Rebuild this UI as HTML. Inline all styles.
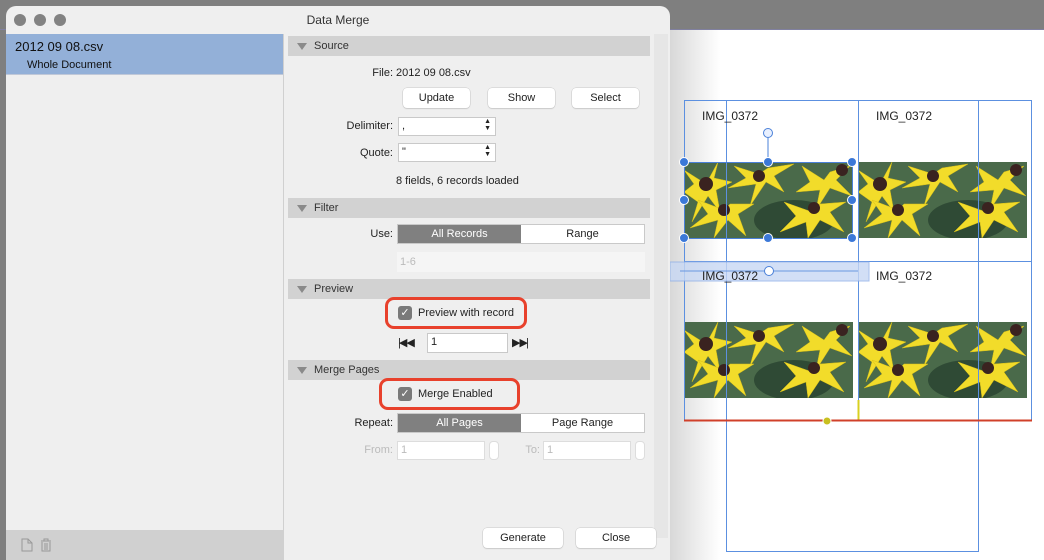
<!DOCTYPE html>
<html><head><style>
*{box-sizing:border-box;margin:0;padding:0}
html,body{width:1044px;height:560px;overflow:hidden}
body{background:#7f7f7f;font-family:"Liberation Sans",sans-serif;font-size:11px;color:#222;position:relative}
.abs{position:absolute}
.win{left:6px;top:6px;width:664px;height:554px;background:#efefef;border-radius:10px 10px 0 0;overflow:hidden}
.hdr{position:absolute;left:282px;width:362px;height:20px;background:#d2d2d2;font-size:11px;line-height:20px;padding-left:26px;color:#333}
.hdr:before{content:"";position:absolute;left:9px;top:7px;border-left:5px solid transparent;border-right:5px solid transparent;border-top:7px solid #8a8a8a}
.lbl{position:absolute;text-align:right;font-size:11px}
.btn{position:absolute;height:20px;background:#fff;border-radius:4px;box-shadow:0 0 0 .5px #c8c8c8,0 1px 1px #ccc;text-align:center;line-height:20px;font-size:11px}
.fld{position:absolute;height:19px;background:#fff;border:1px solid #c9c9c9;font-size:11px;line-height:17px;padding-left:3px}
.seg{position:absolute;height:20px;border:1px solid #c9c9c9;background:#fff;display:flex;font-size:11px;line-height:18px}
.seg div{flex:1;text-align:center}
.seg .on{background:#808080;color:#fff}
.cb{position:absolute;width:14px;height:14px;background:#7a7a7a;border-radius:3px;color:#fff;font-size:11px;line-height:14px;text-align:center}
.red{position:absolute;border:3px solid #e8412c;border-radius:9px}
</style></head><body>
<div class="abs" style="left:0;top:29px;width:1044px;height:1px;background:#8080a0"></div>
<div class="abs" style="left:670px;top:30px;width:374px;height:530px;background:#fff"></div>
<div class="abs" style="left:670px;top:30px;width:50px;height:530px;background:linear-gradient(90deg,#d8d8d8,#fff)"></div>
<svg class="abs" style="left:0;top:0" width="1044" height="560">
<defs>
<symbol id="fl" viewBox="0 0 169 76" width="169" height="76" overflow="hidden">
<rect width="169" height="76" fill="#4a6a4a"/>
<ellipse cx="110" cy="58" rx="40" ry="20" fill="#2f4a35"/>
<g fill="#f2dc2a" stroke="#d8c018" stroke-width=".5">
<path d="M22 22 L0 8 L10 22 L0 30 L14 40 L8 60 L24 34 L36 50 L32 28 L48 20 L30 16 L34 0 Z"/>
<path d="M75 12 L50 4 L62 16 L44 26 L72 22 L66 44 L82 20 L100 30 L90 14 L110 2 L84 6 Z"/>
<path d="M140 18 L118 4 L126 20 L112 30 L136 28 L132 48 L146 26 L168 34 L152 18 L166 4 L146 10 Z"/>
<path d="M40 48 L14 38 L24 52 L6 66 L34 58 L30 76 L44 58 L62 74 L54 52 L70 42 L46 42 Z"/>
<path d="M128 50 L100 40 L112 54 L96 70 L122 60 L124 76 L136 58 L160 70 L146 50 L162 40 L136 42 Z"/>
</g>
<g fill="#3a2320"><circle cx="22" cy="22" r="7"/><circle cx="75" cy="14" r="6"/><circle cx="158" cy="8" r="6"/><circle cx="40" cy="48" r="6"/><circle cx="130" cy="46" r="6"/></g>
</symbol>
</defs>
<use href="#fl" x="684" y="162"/>
<use href="#fl" x="858" y="162"/>
<use href="#fl" x="684" y="322"/>
<use href="#fl" x="858" y="322"/>
<g fill="none" stroke="#5c90e0" stroke-width="1">
<rect x="684.5" y="100.5" width="347" height="320"/>
<rect x="726.5" y="100.5" width="252" height="451"/>
<line x1="858.5" y1="100" x2="858.5" y2="420"/>
<line x1="684" y1="261.5" x2="1032" y2="261.5"/>
</g>
<rect x="670" y="262" width="199" height="19" fill="#c8d8f4" opacity=".8" stroke="#90b0e8"/>
<line x1="680" y1="271" x2="858" y2="271" stroke="#6a98e0"/>
<line x1="858.5" y1="400" x2="858.5" y2="420" stroke="#d8d020" stroke-width="2"/>
<line x1="684" y1="420.5" x2="1032" y2="420.5" stroke="#d0402a" stroke-width="2"/>
<circle cx="827" cy="421" r="4" fill="#c8c020" stroke="#fff"/>
<rect x="684.5" y="162.5" width="168" height="76" fill="none" stroke="#4a80d8"/>
<line x1="768" y1="138" x2="768" y2="162" stroke="#4a80d8"/>
<g fill="#3b78d8" stroke="#fff"><circle cx="684" cy="162" r="4.5"/><circle cx="768" cy="162" r="4.5"/><circle cx="852" cy="162" r="4.5"/><circle cx="684" cy="200" r="4.5"/><circle cx="852" cy="200" r="4.5"/><circle cx="684" cy="238" r="4.5"/><circle cx="768" cy="238" r="4.5"/><circle cx="852" cy="238" r="4.5"/></g>
<circle cx="768" cy="133" r="4.5" fill="#e8f0ff" stroke="#4a80d8"/>
<circle cx="769" cy="271" r="4.5" fill="#fff" stroke="#4a80d8"/>
<g font-family="Liberation Sans" font-size="12" fill="#222"><text x="702" y="120">IMG_0372</text><text x="876" y="120">IMG_0372</text><text x="702" y="280">IMG_0372</text><text x="876" y="280">IMG_0372</text></g>
</svg>
<div class="abs win">
<div class="abs" style="left:8px;top:8px;width:12px;height:12px;border-radius:6px;background:#828282"></div>
<div class="abs" style="left:28px;top:8px;width:12px;height:12px;border-radius:6px;background:#828282"></div>
<div class="abs" style="left:48px;top:8px;width:12px;height:12px;border-radius:6px;background:#828282"></div>
<div class="abs" style="left:0;top:7px;width:664px;text-align:center;font-size:12px;color:#333">Data Merge</div>
<div class="abs" style="left:0;top:28px;width:278px;height:530px;background:#efefef;border-right:1px solid #d0d0d0"></div>
<div class="abs" style="left:0;top:28px;width:277px;height:41px;background:#93b0d8;border-bottom:1px solid #c0c8d8"></div>
<div class="abs" style="left:9px;top:33px;font-size:13px;color:#111">2012 09 08.csv</div>
<div class="abs" style="left:21px;top:53px;font-size:11px;color:#111">Whole Document</div>
<div class="abs" style="left:0;top:524px;width:278px;height:36px;background:#d0d0d0"></div>
<svg class="abs" style="left:14px;top:532px" width="40" height="14"><path d="M2 1h6l4 4v8H2z M8 1v4h4" fill="none" stroke="#999"/><path d="M21 3h10M24 3V1h4v2M22 4v9h8V4M25 5v7M27 5v7" fill="none" stroke="#999"/></svg>
<div class="abs" style="left:648px;top:28px;width:14px;height:504px;background:#e6e6e6"></div>
<div class="hdr" style="top:30px">Source</div>
<div class="lbl" style="left:320px;top:61px;width:67px">File:</div>
<div class="abs" style="left:390px;top:61px">2012 09 08.csv</div>
<div class="btn" style="left:397px;top:82px;width:67px">Update</div>
<div class="btn" style="left:482px;top:82px;width:67px">Show</div>
<div class="btn" style="left:566px;top:82px;width:67px">Select</div>
<div class="lbl" style="left:300px;top:114px;width:87px">Delimiter:</div>
<div class="fld" style="left:392px;top:111px;width:98px">,<span style="position:absolute;right:4px;top:0;font-size:7px;line-height:7px">▲<br>▼</span></div>
<div class="lbl" style="left:300px;top:141px;width:87px">Quote:</div>
<div class="fld" style="left:392px;top:137px;width:98px">"<span style="position:absolute;right:4px;top:0;font-size:7px;line-height:7px">▲<br>▼</span></div>
<div class="abs" style="left:390px;top:169px">8 fields, 6 records loaded</div>
<div class="hdr" style="top:192px">Filter</div>
<div class="lbl" style="left:300px;top:222px;width:87px">Use:</div>
<div class="seg" style="left:391px;top:218px;width:248px"><div class="on">All Records</div><div>Range</div></div>
<div class="abs" style="left:391px;top:246px;width:248px;height:20px;background:#f5f5f5;color:#bbb;padding:4px 3px">1-6</div>
<div class="hdr" style="top:273px">Preview</div>
<div class="red" style="left:379px;top:291px;width:142px;height:32px"></div>
<div class="cb" style="left:392px;top:300px">✓</div>
<div class="abs" style="left:412px;top:301px">Preview with record</div>
<div class="abs" style="left:392px;top:330px;font-size:11px;letter-spacing:-2px">|◀ ◀</div>
<div class="fld" style="left:421px;top:327px;width:81px;height:20px">1</div>
<div class="abs" style="left:506px;top:330px;font-size:11px;letter-spacing:-2px">▶ ▶|</div>
<div class="hdr" style="top:354px">Merge Pages</div>
<div class="red" style="left:373px;top:372px;width:141px;height:32px"></div>
<div class="cb" style="left:392px;top:381px">✓</div>
<div class="abs" style="left:412px;top:382px">Merge Enabled</div>
<div class="lbl" style="left:300px;top:411px;width:87px">Repeat:</div>
<div class="seg" style="left:391px;top:407px;width:248px"><div class="on">All Pages</div><div>Page Range</div></div>
<div class="lbl" style="left:300px;top:438px;width:87px;color:#bbb">From:</div>
<div class="fld" style="left:391px;top:435px;width:88px;border-color:#ddd;color:#bbb">1</div>
<div class="fld" style="left:483px;top:435px;width:10px;border-color:#ddd;border-radius:4px"></div>
<div class="lbl" style="left:500px;top:438px;width:34px;color:#bbb">To:</div>
<div class="fld" style="left:537px;top:435px;width:88px;border-color:#ddd;color:#bbb">1</div>
<div class="fld" style="left:629px;top:435px;width:10px;border-color:#ddd;border-radius:4px"></div>
<div class="btn" style="left:477px;top:522px;width:80px">Generate</div>
<div class="btn" style="left:570px;top:522px;width:80px">Close</div>
</div>
</body></html>
